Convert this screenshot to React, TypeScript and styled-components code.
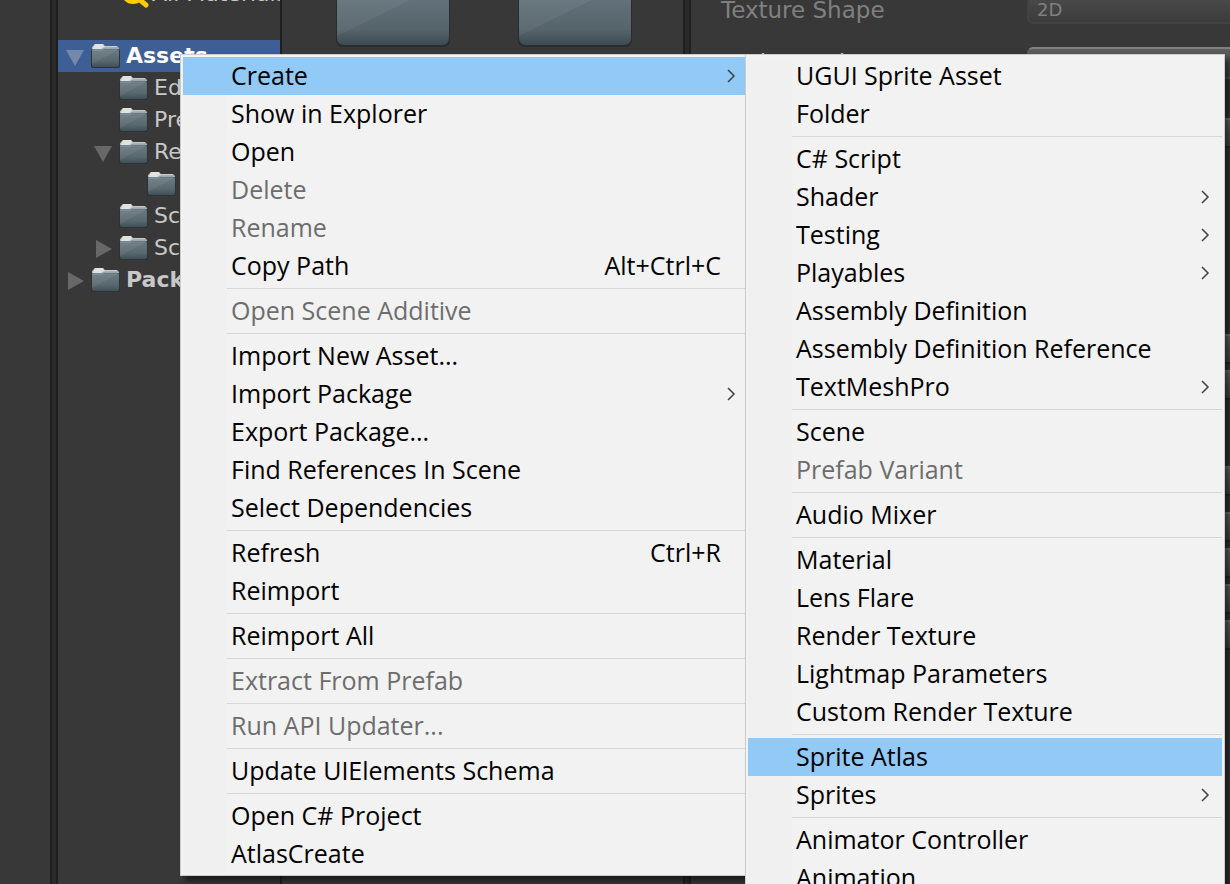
import React from 'react';
import styled, { createGlobalStyle } from 'styled-components';

const GlobalStyle = createGlobalStyle`
  * { box-sizing: border-box; }
  body { margin: 0; background: #383838; overflow: hidden; }
`;

const Editor = styled.div`
  position: relative;
  display: flex;
  height: 100vh;
  overflow: hidden;
  background: #383838;
  color: #c8c8c8;
  font: 22px/32px 'DejaVu Sans', Verdana, sans-serif;
`;

const Gradients = styled.svg`
  position: absolute;
`;

const SidePanel = styled.section`
  flex: 0 0 50px;
`;

const Splitter = styled.div`
  flex: 0 0 8px;
  background: #2a2a2a;
  border: solid #1f1f1f;
  border-width: 0 2px;
`;

const TreePanel = styled.nav`
  flex: 0 0 222px;
  overflow: hidden;
`;

const Favorites = styled.div`
  display: flex;
  flex-direction: column;
  justify-content: flex-end;
  height: 40px;
  padding-bottom: 30px;
`;

const FavoriteRow = styled.div`
  display: flex;
  flex: 0 0 32px;
  align-items: center;
  gap: 2px;
  padding-left: 62px;
  white-space: nowrap;
`;

const SearchSvg = styled.svg`
  flex: none;
  width: 30px;
  height: 32px;
`;

const Tree = styled.ul`
  list-style: none;
  margin: 0;
  padding: 0;
`;

const TreeRow = styled.li<{ $depth: number; $selected?: boolean; $bold?: boolean }>`
  display: flex;
  align-items: center;
  height: 32px;
  padding-left: ${p => 6 + p.$depth * 28}px;
  white-space: nowrap;
  background: ${p => (p.$selected ? '#3e5f96' : 'transparent')};
  color: ${p => (p.$selected ? '#fff' : '#c8c8c8')};
  font-weight: ${p => (p.$bold ? 700 : 400)};
`;

const Twisty = styled.svg`
  flex: none;
  width: 27px;
  height: 32px;
`;

const FolderSvg = styled.svg`
  flex: none;
  width: 29px;
  height: 32px;
  margin-right: 6px;
`;

const AssetGrid = styled.section`
  display: flex;
  flex: 0 0 403px;
  align-items: flex-start;
  gap: 66px;
  padding-left: 53px;
  border-left: 2px solid #1f1f1f;
`;

const FolderTile = styled.svg`
  flex: none;
  width: 116px;
  height: 50px;
`;

const Inspector = styled.section`
  display: flex;
  flex: 1;
  flex-direction: column;
  min-width: 0;
  padding-left: 30px;
  overflow: hidden;
`;

const Field = styled.label<{ $muted?: boolean }>`
  display: flex;
  flex: none;
  align-items: ${p => (p.$muted ? 'flex-end' : 'center')};
  height: ${p => (p.$muted ? 24 : 32)}px;
  margin-bottom: ${p => (p.$muted ? 23 : 0)}px;
  color: ${p => (p.$muted ? '#808080' : '#c8c8c8')};
`;

const FieldName = styled.span`
  flex: 0 0 306px;
  font-size: 23px;
  line-height: 28px;
`;

const Dropdown = styled.select`
  flex: 1;
  min-width: 260px;
  height: 32px;
  padding: 0 8px;
  appearance: none;
  border: 2px solid #5a5a5a;
  border-top-color: #808080;
  border-radius: 6px;
  background: linear-gradient(#5c5c5c, #464646);
  color: #dcdcdc;
  font: 18px/24px 'DejaVu Sans', Verdana, sans-serif;
  opacity: 1;
  &:disabled {
    height: 28px;
    border-color: #424242;
    background: linear-gradient(#4a4a4a, #3b3b3b);
    color: #808080;
  }
`;

const ControlSlot = styled.div<{ $gap: number }>`
  flex: none;
  height: 30px;
  margin: ${p => p.$gap}px 0 0 306px;
  border: solid #808080;
  border-width: 2px 0 0;
  border-bottom: 2px solid #2a2a2a;
  background: linear-gradient(#6a6a6a, #464646);
`;

const MenuLayer = styled.div`
  position: absolute;
  top: 54px;
  left: 180px;
  display: flex;
  align-items: flex-start;
  font: 25px/36px 'Open Sans', 'Noto Sans', sans-serif;
`;

const Menu = styled.div<{ $sub?: boolean }>`
  width: ${p => (p.$sub ? 480 : 571)}px;
  margin-left: ${p => (p.$sub ? -6 : 0)}px;
  padding: 2px;
  border: 1px solid #ccc;
  background: #f2f2f2;
  box-shadow: 5px 5px 5px rgba(0, 0, 0, 0.5);
`;

const MenuBody = styled.div`
  background: linear-gradient(to right, #f0f0f0 44px, #f2f2f2 44px);
`;

const MenuItem = styled.button<{ $active?: boolean }>`
  display: flex;
  align-items: center;
  width: 100%;
  height: 38px;
  padding: 0 12px 0 48px;
  border: 0;
  background: ${p => (p.$active ? '#91c9f7' : 'transparent')};
  color: #000;
  font: inherit;
  text-align: left;
  white-space: nowrap;
  &:disabled { color: #6d6d6d; }
`;

const ItemLabel = styled.span`
  flex: 1;
  padding-bottom: 2px;
`;

const Shortcut = styled.kbd`
  margin-right: 15px;
  padding-bottom: 2px;
  font: inherit;
`;

const Chevron = styled.svg`
  flex: none;
  width: 10px;
  height: 14px;
`;

const Separator = styled.hr`
  height: 7px;
  margin: 0 0 0 44px;
  border: solid transparent;
  border-width: 3px 0;
  background: #d7d7d7;
  background-clip: padding-box;
`;

type Entry = '-' | { label: string; keys?: string; sub?: boolean; off?: boolean; active?: boolean };

const assetMenu: Entry[] = [
  { label: 'Create', sub: true, active: true },
  { label: 'Show in Explorer' },
  { label: 'Open' },
  { label: 'Delete', off: true },
  { label: 'Rename', off: true },
  { label: 'Copy Path', keys: 'Alt+Ctrl+C' },
  '-',
  { label: 'Open Scene Additive', off: true },
  '-',
  { label: 'Import New Asset...' },
  { label: 'Import Package', sub: true },
  { label: 'Export Package...' },
  { label: 'Find References In Scene' },
  { label: 'Select Dependencies' },
  '-',
  { label: 'Refresh', keys: 'Ctrl+R' },
  { label: 'Reimport' },
  '-',
  { label: 'Reimport All' },
  '-',
  { label: 'Extract From Prefab', off: true },
  '-',
  { label: 'Run API Updater...', off: true },
  '-',
  { label: 'Update UIElements Schema' },
  '-',
  { label: 'Open C# Project' },
  { label: 'AtlasCreate' },
];

const createMenu: Entry[] = [
  { label: 'UGUI Sprite Asset' },
  { label: 'Folder' },
  '-',
  { label: 'C# Script' },
  { label: 'Shader', sub: true },
  { label: 'Testing', sub: true },
  { label: 'Playables', sub: true },
  { label: 'Assembly Definition' },
  { label: 'Assembly Definition Reference' },
  { label: 'TextMeshPro', sub: true },
  '-',
  { label: 'Scene' },
  { label: 'Prefab Variant', off: true },
  '-',
  { label: 'Audio Mixer' },
  '-',
  { label: 'Material' },
  { label: 'Lens Flare' },
  { label: 'Render Texture' },
  { label: 'Lightmap Parameters' },
  { label: 'Custom Render Texture' },
  '-',
  { label: 'Sprite Atlas', active: true },
  { label: 'Sprites', sub: true },
  '-',
  { label: 'Animator Controller' },
  { label: 'Animation' },
];

type Node = { name: string; depth: number; fold?: 'open' | 'closed'; bold?: boolean; selected?: boolean };

const nodes: Node[] = [
  { name: 'Assets', depth: 0, fold: 'open', bold: true, selected: true },
  { name: 'Ed', depth: 1 },
  { name: 'Pre', depth: 1 },
  { name: 'Re', depth: 1, fold: 'open' },
  { name: '', depth: 2 },
  { name: 'Sc', depth: 1 },
  { name: 'Sc', depth: 1, fold: 'closed' },
  { name: 'Pack', depth: 0, fold: 'closed', bold: true },
];

// Space above each control further down the inspector.
const slotGaps = [39, 186, 6, 66, 16, 6, 6, 6];

function Folder() {
  return (
    <FolderSvg viewBox="0 0 29 32" aria-hidden="true">
      <path d="M1 12V7l3-3h8l2 2h12l2 2v4z" fill="#b4b6b6" />
      <path d="M2 8l2-4h8l1 3-3 2H2z" fill="#e2e2e2" />
      <path d="M13 7h13" stroke="#dedede" />
      <rect x="0" y="9" width="29" height="19" rx="2" fill="#2b3337" />
      <rect x="1" y="9" width="27" height="18" rx="2" fill="url(#folder)" />
      <path d="M1 10h10l3-2h13" fill="none" stroke="#87959b" />
      <path d="M1 10h26L1 24z" fill="#fff" opacity="0.06" />
    </FolderSvg>
  );
}

function Arrow({ fold, selected }: { fold?: 'open' | 'closed'; selected?: boolean }) {
  return (
    <Twisty viewBox="0 0 27 32" aria-hidden="true">
      {fold === 'open' && <path d="M2 10h18l-9 16z" fill={selected ? '#7488ac' : '#686868'} />}
      {fold === 'closed' && <path d="M4 8l16 9-16 9z" fill="#686868" />}
    </Twisty>
  );
}

function Tile() {
  return (
    <FolderTile viewBox="0 0 116 50" aria-hidden="true">
      <path d="M1 0h114v40q0 7-7 7H8q-7 0-7-7z" fill="#292c2e" />
      <path d="M2 0h112v38q0 7-7 7H9q-7 0-7-7z" fill="url(#tile)" />
      <path d="M2 0h73L2 36z" fill="#fff" opacity="0.05" />
    </FolderTile>
  );
}

function MenuList({ entries, label, sub }: { entries: Entry[]; label: string; sub?: boolean }) {
  return (
    <Menu role="menu" aria-label={label} $sub={sub}>
      <MenuBody>
        {entries.map((e, i) =>
          e === '-' ? (
            <Separator key={i} />
          ) : (
            <MenuItem key={i} type="button" role="menuitem" disabled={e.off} $active={e.active}>
              <ItemLabel>{e.label}</ItemLabel>
              {e.keys && <Shortcut>{e.keys}</Shortcut>}
              {e.sub && (
                <Chevron viewBox="0 0 10 14" aria-hidden="true">
                  <path d="M2 1l6 6-6 6" fill="none" stroke="#404040" strokeWidth="1.5" />
                </Chevron>
              )}
            </MenuItem>
          ),
        )}
      </MenuBody>
    </Menu>
  );
}

export default function App() {
  return (
    <Editor>
      <GlobalStyle />
      <Gradients width="0" height="0" aria-hidden="true">
        <defs>
          <linearGradient id="folder" x1="0" y1="0" x2="0" y2="1">
            <stop offset="0" stopColor="#6c7c84" />
            <stop offset="0.7" stopColor="#57666d" />
            <stop offset="1" stopColor="#3f4f56" />
          </linearGradient>
          <linearGradient id="tile" x1="0" y1="0" x2="0" y2="1">
            <stop offset="0" stopColor="#62717a" />
            <stop offset="0.65" stopColor="#56646b" />
            <stop offset="1" stopColor="#3c4b53" />
          </linearGradient>
        </defs>
      </Gradients>
      <SidePanel />
      <Splitter />
      <TreePanel aria-label="Project">
        <Favorites>
          <FavoriteRow>
            <SearchSvg viewBox="0 0 30 32" aria-hidden="true">
              <circle cx="13" cy="14" r="10" fill="none" stroke="#fc0" strokeWidth="4" />
              <path d="M19 21l7 6" stroke="#fc0" strokeWidth="5" strokeLinecap="round" />
            </SearchSvg>
            All Materials
          </FavoriteRow>
        </Favorites>
        <Tree>
          {nodes.map((n, i) => (
            <TreeRow key={i} $depth={n.depth} $selected={n.selected} $bold={n.bold}>
              <Arrow fold={n.fold} selected={n.selected} />
              <Folder />
              {n.name}
            </TreeRow>
          ))}
        </Tree>
      </TreePanel>
      <AssetGrid>
        <Tile />
        <Tile />
      </AssetGrid>
      <Splitter />
      <Inspector>
        <Field $muted>
          <FieldName>Texture Shape</FieldName>
          <Dropdown disabled>
            <option>2D</option>
          </Dropdown>
        </Field>
        <Field>
          <FieldName>Sprite Mode</FieldName>
          <Dropdown>
            <option>Multiple</option>
          </Dropdown>
        </Field>
        {slotGaps.map((gap, i) => (
          <ControlSlot key={i} $gap={gap} />
        ))}
      </Inspector>
      <MenuLayer>
        <MenuList entries={assetMenu} label="Assets" />
        <MenuList entries={createMenu} label="Create" sub />
      </MenuLayer>
    </Editor>
  );
}
